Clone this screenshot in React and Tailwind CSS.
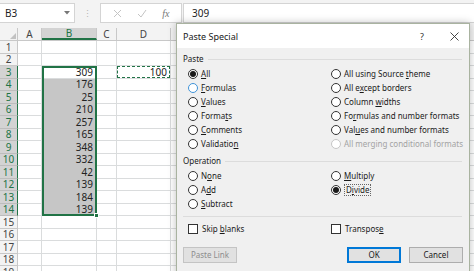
import React from 'react';

const cols = [
  { key: 'A', w: 'w-[24px]' },
  { key: 'B', w: 'w-[55px]' },
  { key: 'C', w: 'w-[20px]' },
  { key: 'D', w: 'w-[54px]' },
];

const values = { 3: '309', 4: '176', 5: '25', 6: '210', 7: '257', 8: '165', 9: '348', 10: '332', 11: '42', 12: '139', 13: '184', 14: '139' };

const rows = Array.from({ length: 19 }, (_, i) => i + 1);

// underline the accelerator letter
function Acc({ text, at }) {
  if (at < 0) return <span>{text}</span>;
  return (
    <span>
      {text.slice(0, at)}
      <span className="underline underline-offset-1">{text[at]}</span>
      {text.slice(at + 1)}
    </span>
  );
}

function Radio({ label, at, checked, hover, disabled, focus }) {
  return (
    <div className="flex items-center h-[14px]">
      <span
        className={`w-[10px] h-[10px] rounded-full border bg-white flex items-center justify-center shrink-0 ${
          disabled ? 'border-[#c6c6c6]' : hover ? 'border-[#3f93d8]' : 'border-[#333]'
        }`}
      >
        {checked && <span className="w-[6px] h-[6px] rounded-full bg-[#1a1a1a]" />}
      </span>
      <span
        className={`ml-[3px] ${disabled ? 'text-[#a3a3a3]' : 'text-[#1a1a1a]'} ${
          focus ? 'border border-dotted border-[#666] px-[1px] py-[1px]' : ''
        }`}
      >
        <Acc text={label} at={at} />
      </span>
    </div>
  );
}

function Check({ label, at }) {
  return (
    <div className="flex items-center h-[14px]">
      <span className="w-[10px] h-[10px] border border-[#333] bg-white shrink-0" />
      <span className="ml-[4px] text-[#1a1a1a]">
        <Acc text={label} at={at} />
      </span>
    </div>
  );
}

function Group({ title }) {
  return (
    <div className="flex items-center h-[14px] pr-[7px]">
      <span className="text-[#1a1a1a] mr-[4px]">{title}</span>
      <span className="flex-1 border-t border-[#dcdcdc]" />
    </div>
  );
}

export default function App() {
  return (
    <div className="relative w-[474px] h-[271px] overflow-hidden bg-white" style={{ fontFamily: '"Noto Sans", "Liberation Sans", sans-serif' }}>
      {/* formula bar */}
      <div className="h-[28px] bg-[#f3f3f3] flex items-start pt-[3px]">
        <div className="w-[75px] h-[20px] bg-white border border-[#d4d4d4] border-l-0 flex items-center justify-between pl-[5px] pr-[4px]">
          <span className="text-[10px] text-[#222]">B3</span>
          <svg width="6" height="4" viewBox="0 0 6 4"><path d="M0 0h6L3 3.5z" fill="#777" /></svg>
        </div>
        <div className="w-[25px] h-[20px] flex items-center justify-center text-[#b5b5b5] text-[9px] leading-none">⋮</div>
        <div className="w-[82px] h-[20px] bg-white border border-[#d4d4d4] flex items-center justify-around px-[4px]">
          <svg width="9" height="9" viewBox="0 0 9 9"><path d="M1 1l7 7M8 1L1 8" stroke="#c4c4c4" strokeWidth="1" /></svg>
          <svg width="10" height="9" viewBox="0 0 10 9"><path d="M1 5l3 3 5-7" stroke="#c4c4c4" strokeWidth="1" fill="none" /></svg>
          <span className="text-[10px] italic text-[#777]" style={{ fontFamily: '"Liberation Serif", serif' }}>fx</span>
        </div>
        <div className="flex-1 h-[20px] ml-[1px] bg-white border border-[#d4d4d4] border-r-0 flex items-center pl-[8px]">
          <span className="text-[10px] text-[#222]">309</span>
        </div>
      </div>

      {/* sheet */}
      <div className="relative text-[10px] leading-[12px]">
        {/* header row */}
        <div className="flex h-[13px] bg-[#f3f3f3] border-b border-[#c8c8c8]">
          <div className="w-[18px] border-r border-[#c8c8c8] flex items-end justify-end p-[1px]">
            <svg width="6" height="6" viewBox="0 0 6 6"><path d="M6 0v6H0z" fill="#c2c2c2" /></svg>
          </div>
          {cols.map((c) => (
            <div
              key={c.key}
              className={`${c.w} border-r border-[#c8c8c8] flex items-center justify-center ${
                c.key === 'B' ? 'bg-[#d3d3d3] text-[#217346] border-b-2 border-b-[#217346]' : 'text-[#444]'
              }`}
            >
              {c.key}
            </div>
          ))}
          <div className="flex-1" />
        </div>

        {rows.map((r) => {
          const sel = r >= 3 && r <= 14;
          return (
            <div key={r} className="flex h-[12.5px] overflow-hidden">
              <div
                className={`w-[18px] border-b border-r flex items-center justify-center ${
                  sel ? 'bg-[#d3d3d3] text-[#217346] border-r-[#217346] border-b-[#bdbdbd]' : 'bg-[#f3f3f3] text-[#444] border-[#c8c8c8]'
                }`}
              >
                {r}
              </div>
              <div className="w-[24px] border-b border-r border-[#dadcdd]" />
              <div
                className={`w-[55px] border-b border-r border-[#dadcdd] flex items-center justify-end pr-[3px] text-[#222] ${
                  sel && r !== 3 ? 'bg-[#c6c6c6] border-b-[#c6c6c6]' : ''
                }`}
              >
                {values[r]}
              </div>
              <div className="w-[20px] border-b border-r border-[#dadcdd]" />
              <div className="w-[54px] border-b border-r border-[#dadcdd] flex items-center justify-end text-[#222]">
                {r === 3 ? (
                  <span className="w-full h-full border-[1.5px] border-dashed border-[#217346] flex items-center justify-end pr-[2px] leading-none">100</span>
                ) : null}
              </div>
              <div className="flex-1 border-b border-[#dadcdd]" />
            </div>
          );
        })}

        {/* selection outline B3:B14 */}
        <div className="absolute left-[42px] top-[38px] w-[55px] h-[150px] border-2 border-[#217346] pointer-events-none">
          <span className="absolute -right-[4px] -bottom-[4px] w-[5px] h-[5px] bg-[#217346] border border-white" />
        </div>
      </div>

      {/* Paste Special dialog */}
      <div className="absolute left-[176px] top-[23px] w-[294px] h-[262px] border border-[#a9b3a0] bg-[#f0f0f0] shadow-[0_0_8px_rgba(0,0,0,0.25)] text-[8px] leading-none">
        <div className="h-[24px] bg-white flex items-center pl-[6px] pr-[10px]">
          <span className="text-[9px] text-[#1a1a1a] flex-1">Paste Special</span>
          <span className="text-[9px] text-[#333] mr-[26px]">?</span>
          <svg width="9" height="9" viewBox="0 0 9 9"><path d="M0.5 0.5l8 8M8.5 0.5l-8 8" stroke="#333" strokeWidth="0.9" /></svg>
        </div>

        <div className="pl-[6px] pt-[4px]">
          <Group title="Paste" />
          <div className="grid grid-cols-[143px_1fr] pl-[5px] mt-[1px]">
            <div>
              <Radio label="All" at={0} checked />
              <Radio label="Formulas" at={0} hover />
              <Radio label="Values" at={0} />
              <Radio label="Formats" at={5} />
              <Radio label="Comments" at={0} />
              <Radio label="Validation" at={9} />
            </div>
            <div>
              <Radio label="All using Source theme" at={17} />
              <Radio label="All except borders" at={5} />
              <Radio label="Column widths" at={7} />
              <Radio label="Formulas and number formats" at={2} />
              <Radio label="Values and number formats" at={3} />
              <Radio label="All merging conditional formats" at={-1} disabled />
            </div>
          </div>

          <div className="mt-[3px]">
            <Group title="Operation" />
          </div>
          <div className="grid grid-cols-[143px_1fr] pl-[5px] mt-[1px]">
            <div>
              <Radio label="None" at={1} />
              <Radio label="Add" at={1} />
              <Radio label="Subtract" at={0} />
            </div>
            <div>
              <Radio label="Multiply" at={0} />
              <Radio label="Divide" at={1} checked focus />
            </div>
          </div>

          <div className="mr-[7px] mt-[5px] border-t border-[#dcdcdc]" />

          <div className="grid grid-cols-[143px_1fr] pl-[5px] mt-[5px]">
            <Check label="Skip blanks" at={5} />
            <Check label="Transpose" at={8} />
          </div>

          <div className="flex items-center mt-[11px] pr-[6px]">
            <button className="w-[54px] h-[16px] bg-[#e1e1e1] border border-[#c4c4c4] text-[#8d8d8d] text-[8px]">Paste Link</button>
            <div className="flex-1" />
            <button className="w-[54px] h-[16px] bg-[#e1e1e1] border-2 border-[#0078d7] text-[#1a1a1a] text-[8px]">OK</button>
            <button className="w-[54px] h-[16px] ml-[8px] bg-[#e1e1e1] border border-[#adadad] text-[#1a1a1a] text-[8px]">Cancel</button>
          </div>
        </div>
      </div>
    </div>
  );
}
